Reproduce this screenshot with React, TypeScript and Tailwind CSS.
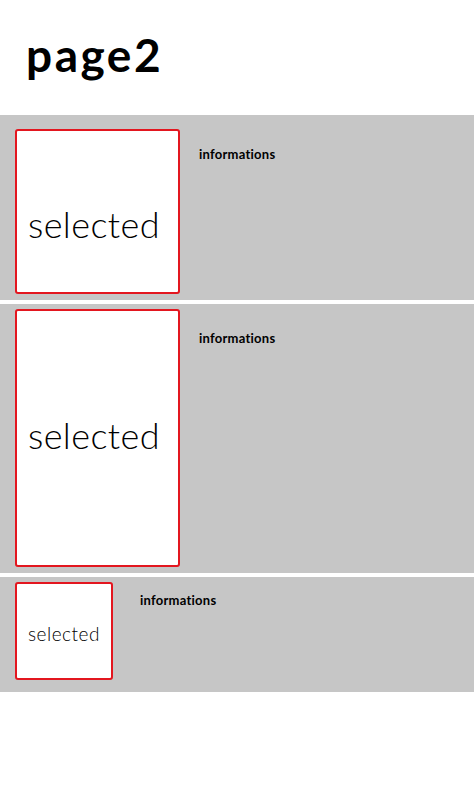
import type { ReactNode } from 'react';

interface Entry {
  id: string;
  band: string;
  card: string;
  label: string;
  info: string;
}

const entries: Entry[] = [
  {
    id: 'first',
    band: 'pt-[14px] pb-[6px]',
    card: 'w-[165px] h-[165px] pt-[26px]',
    label: 'text-[36px] tracking-[0.4px]',
    info: 'ml-[19px] mt-[17px]',
  },
  {
    id: 'second',
    band: 'pt-[5px] pb-[6px]',
    card: 'w-[165px] h-[258px] pb-[6px]',
    label: 'text-[36px] tracking-[0.4px]',
    info: 'ml-[19px] mt-[21px]',
  },
  {
    id: 'third',
    band: 'pt-[5px] pb-[12px]',
    card: 'w-[98px] h-[98px] pt-[5px]',
    label: 'text-[19px] tracking-[0.5px]',
    info: 'ml-[27px] mt-[10px]',
  },
];

function Band({ children, className }: { children: ReactNode; className: string }) {
  return <div className={`flex items-start bg-[#c6c6c6] pl-[15px] ${className}`}>{children}</div>;
}

export default function App() {
  return (
    <div className="min-h-screen bg-white font-['Lato','Noto_Sans',sans-serif] text-black">
      {/* Title */}
      <header className="h-[115px] pl-[26px] pt-[32px]">
        <h1 className="text-[46px] font-bold leading-none tracking-[2.5px]">page2</h1>
      </header>

      {/* Item rows */}
      <div className="flex flex-col gap-[4px]">
        {entries.map((e) => (
          <Band key={e.id} className={e.band}>
            <div
              className={`flex shrink-0 flex-col justify-center rounded-[3px] border-2 border-[#e3161f] bg-white pl-[11px] ${e.card}`}
            >
              <span className={`font-light leading-tight ${e.label}`}>selected</span>
            </div>
            <span className={`text-[13px] font-bold leading-tight tracking-[0.25px] ${e.info}`}>informations</span>
          </Band>
        ))}
      </div>
    </div>
  );
}
